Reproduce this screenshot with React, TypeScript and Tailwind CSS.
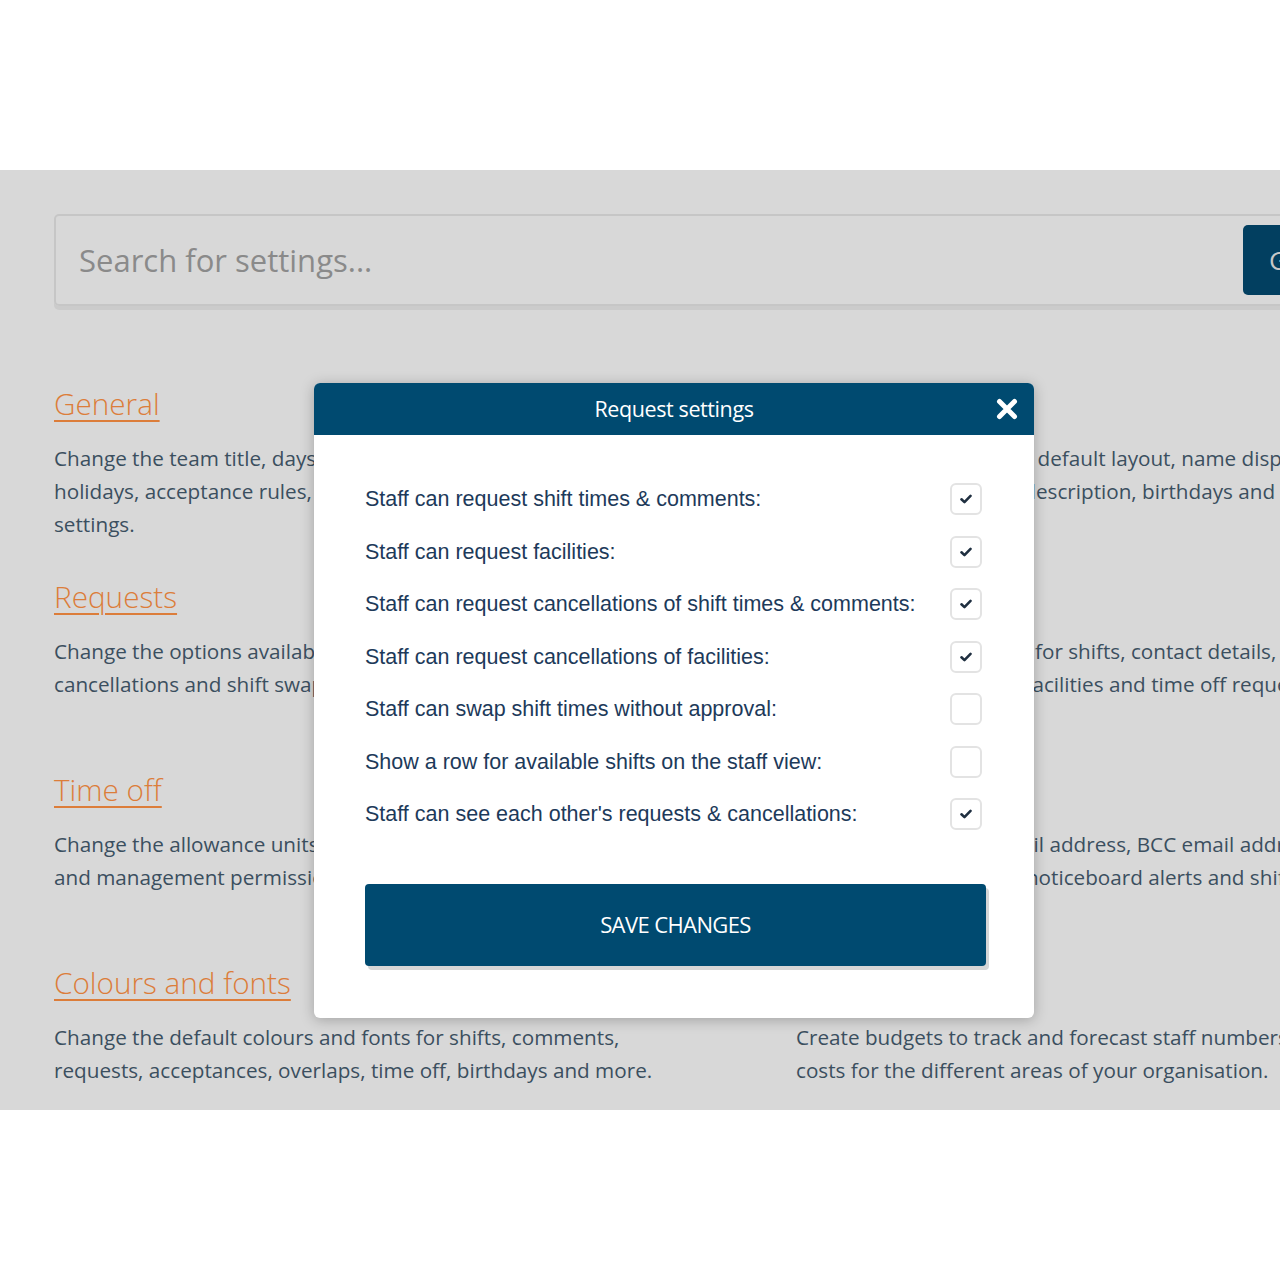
import React from 'react';

const sections = [
  {
    title: 'General',
    lines: ['Change the team title, days of the week, public', 'holidays, acceptance rules, lock and other general', 'settings.'],
  },
  {
    title: 'Layout',
    lines: ["Change the whole view's default layout, name display,", 'time formats, the team description, birthdays and more.'],
  },
  {
    title: 'Requests',
    lines: ['Change the options available to staff for requests,', 'cancellations and shift swaps.'],
  },
  {
    title: 'Staff details',
    lines: ['Change the custom field for shifts, contact details, roles,', 'comments, shift colors, facilities and time off requests.'],
  },
  {
    title: 'Time off',
    lines: ['Change the allowance units, carry over, time off types', 'and management permissions.'],
  },
  {
    title: 'Emails',
    lines: ['Change the reply-to email address, BCC email addresses,', 'email notifications, and noticeboard alerts and shift reminders.'],
  },
  {
    title: 'Colours and fonts',
    lines: ['Change the default colours and fonts for shifts, comments,', 'requests, acceptances, overlaps, time off, birthdays and more.'],
  },
  {
    title: 'Budgets',
    lines: ['Create budgets to track and forecast staff numbers and', 'costs for the different areas of your organisation.'],
  },
];

const options = [
  { label: 'Staff can request shift times & comments:', checked: true },
  { label: 'Staff can request facilities:', checked: true },
  { label: 'Staff can request cancellations of shift times & comments:', checked: true },
  { label: 'Staff can request cancellations of facilities:', checked: true },
  { label: 'Staff can swap shift times without approval:', checked: false },
  { label: 'Show a row for available shifts on the staff view:', checked: false },
  { label: "Staff can see each other's requests & cancellations:", checked: true },
];

function CheckBox({ checked }: { checked: boolean }) {
  return (
    <div className="w-[32px] h-[32px] border-2 border-[#e3e3e3] rounded-[6px] bg-white flex items-center justify-center shrink-0">
      {checked && (
        <svg width="12" height="10" viewBox="0 0 13 11">
          <path d="M1.5 5.8 L4.8 9 L11.5 2" fill="none" stroke="#1f2f40" strokeWidth="2.8" strokeLinecap="round" strokeLinejoin="round" />
        </svg>
      )}
    </div>
  );
}

export default function App() {
  return (
    <div className="w-[1280px] h-[1280px] bg-white flex flex-col font-['Open_Sans',sans-serif]">
      <div className="h-[170px] shrink-0 bg-white" />

      <div className="relative h-[940px] shrink-0 bg-[#d8d8d8] overflow-hidden pl-[54px] pt-[44px]">
        {/* Search */}
        <div className="w-[1320px] h-[92px] border-2 border-[#c6c6c6] rounded-[5px] shadow-[0_4px_0_#cbcbcb] flex items-center pl-[23px] pr-[9px]">
          <span className="flex-1 text-[31px] text-[#8a8a8a]">Search for settings...</span>
          <div className="w-[120px] h-[70px] bg-[#023f60] rounded-[5px] flex items-center pl-[26px] text-[26px] text-[#c8c8c8]">GO</div>
        </div>

        {/* Settings grid */}
        <div className="grid grid-cols-[650px_650px] gap-x-[92px] mt-[78px]">
          {sections.map((s) => (
            <div key={s.title} className="h-[193px]">
              <a className="block w-max text-[29.7px] font-light leading-[40px] text-[#dc7d3a] underline underline-offset-[5px] decoration-[2px]">
                {s.title}
              </a>
              <p className="mt-[18px] text-[20.7px] leading-[33px] text-[#3b4f5f] whitespace-nowrap">
                {s.lines.map((l, i) => (
                  <React.Fragment key={i}>
                    {l}
                    {i < s.lines.length - 1 && <br />}
                  </React.Fragment>
                ))}
              </p>
            </div>
          ))}
        </div>

        {/* Modal */}
        <div className="absolute left-[314px] top-[213px] w-[720px] h-[635px] bg-white rounded-[6px] shadow-[0_2px_14px_rgba(0,0,0,0.25)] overflow-hidden flex flex-col">
          <div className="relative h-[52px] bg-[#004a70] flex items-center justify-center shrink-0">
            <span className="text-[21.5px] text-white tracking-[-0.4px]">Request settings</span>
            <svg className="absolute right-[16px] top-[15px]" width="22" height="22" viewBox="0 0 22 22">
              <path d="M3.5 3.5 L18.5 18.5 M18.5 3.5 L3.5 18.5" stroke="white" strokeWidth="5" strokeLinecap="round" />
            </svg>
          </div>
          <div className="flex-1 pl-[51px] pr-[48px] pt-[38px] flex flex-col">
            <div className="flex flex-col font-['Liberation_Sans',Arial,sans-serif]">
              {options.map((o) => (
                <div key={o.label} className="h-[52.5px] flex items-center justify-between pr-[4px]">
                  <span className="text-[21.5px] text-[#1d3a5a]">{o.label}</span>
                  <CheckBox checked={o.checked} />
                </div>
              ))}
            </div>
            <button className="mt-[43px] w-[621px] h-[82px] bg-[#004a70] rounded-[4px] shadow-[3px_4px_0_#d6d6d6] text-white text-[22px] tracking-[-0.6px]">
              SAVE CHANGES
            </button>
          </div>
        </div>
      </div>

      <div className="flex-1 bg-white" />
    </div>
  );
}
